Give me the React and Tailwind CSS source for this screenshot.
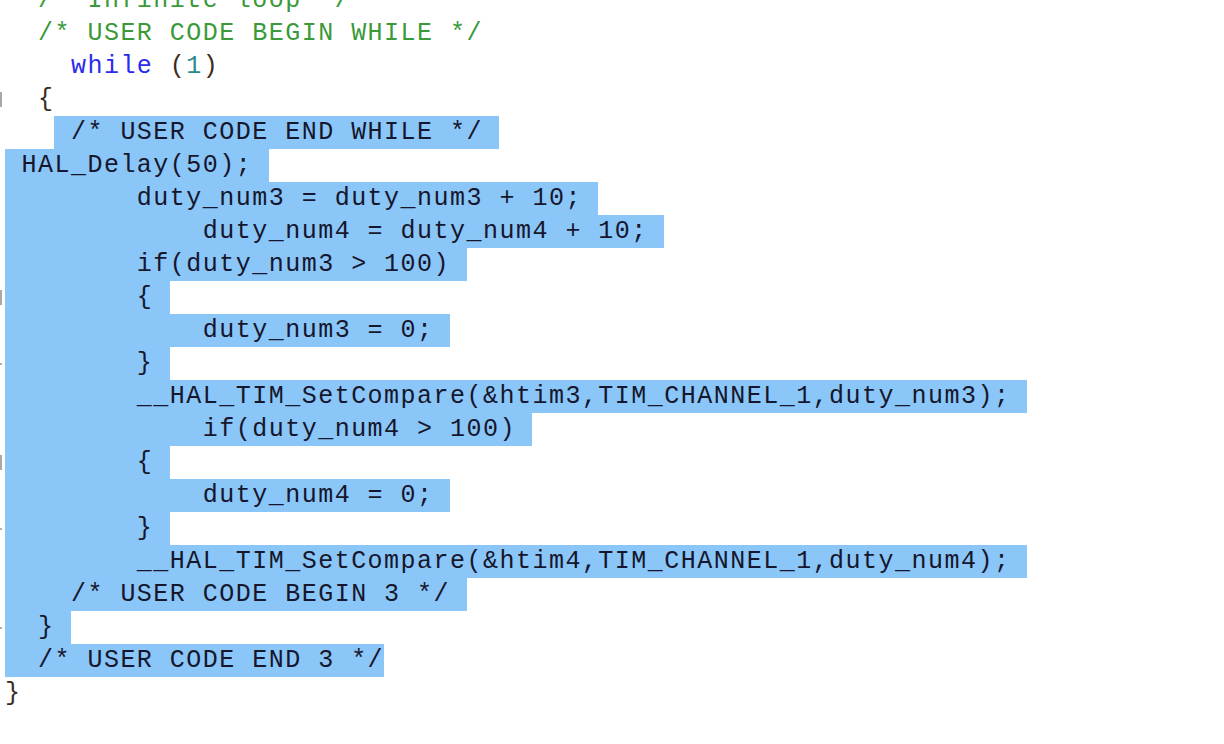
const SEL = 'inline-block h-[33px] bg-[#8ac6f8] text-[#16162c]';

// each line: plain = unselected text before the selection, sel = selected text, mark = gutter mark
const lines = [
  { plain: [['  ', ''], ['/* Infinite loop */', 'text-[#3a9a3a]']] },
  { plain: [['  ', ''], ['/* USER CODE BEGIN WHILE */', 'text-[#3a9a3a]']] },
  { plain: [['    ', ''], ['while', 'text-[#2b2bf0]'], [' (', 'text-[#3a2a20]'], ['1', 'text-[#2a8c8c]'], [')', 'text-[#3a2a20]']] },
  { plain: [['  {', 'text-[#3a2a20]']], mark: 'bar' },
  { plain: [['   ', '']], sel: ' /* USER CODE END WHILE */ ' },
  { sel: ' HAL_Delay(50); ' },
  { sel: '        duty_num3 = duty_num3 + 10; ' },
  { sel: '            duty_num4 = duty_num4 + 10; ' },
  { sel: '        if(duty_num3 > 100) ' },
  { sel: '        { ', mark: 'bar' },
  { sel: '            duty_num3 = 0; ' },
  { sel: '        } ', mark: 'dot' },
  { sel: '        __HAL_TIM_SetCompare(&htim3,TIM_CHANNEL_1,duty_num3); ' },
  { sel: '            if(duty_num4 > 100) ' },
  { sel: '        { ', mark: 'bar' },
  { sel: '            duty_num4 = 0; ' },
  { sel: '        } ', mark: 'dot' },
  { sel: '        __HAL_TIM_SetCompare(&htim4,TIM_CHANNEL_1,duty_num4); ' },
  { sel: '    /* USER CODE BEGIN 3 */ ' },
  { sel: '  } ', mark: 'dot' },
  { sel: '  /* USER CODE END 3 */' },
  { plain: [['}', 'text-[#3a2a20]']] },
];

function Gutter({ mark }) {
  return (
    <div className="w-[5px] shrink-0 flex items-center">
      {mark === 'bar' && <div className="w-[2px] h-[15px] bg-[#a8a8a8]" />}
      {mark === 'dot' && <div className="w-[2px] h-[2px] bg-[#b0b0b0]" />}
    </div>
  );
}

export default function App() {
  return (
    <div className="w-[1224px] h-[744px] bg-white overflow-hidden">
      <div
        className="-mt-[16px] text-[25px] tracking-[1.48px] leading-[33px] text-[#16162c]"
        style={{ fontFamily: '"Liberation Mono", "Courier New", monospace' }}
      >
        {lines.map((line, i) => (
          <div key={i} className="flex h-[33px]">
            <Gutter mark={line.mark} />
            <div className="whitespace-pre">
              {line.plain &&
                line.plain.map(([t, c], j) => (
                  <span key={j} className={c}>
                    {t}
                  </span>
                ))}
              {line.sel && <span className={SEL}>{line.sel}</span>}
            </div>
          </div>
        ))}
      </div>
    </div>
  );
}
